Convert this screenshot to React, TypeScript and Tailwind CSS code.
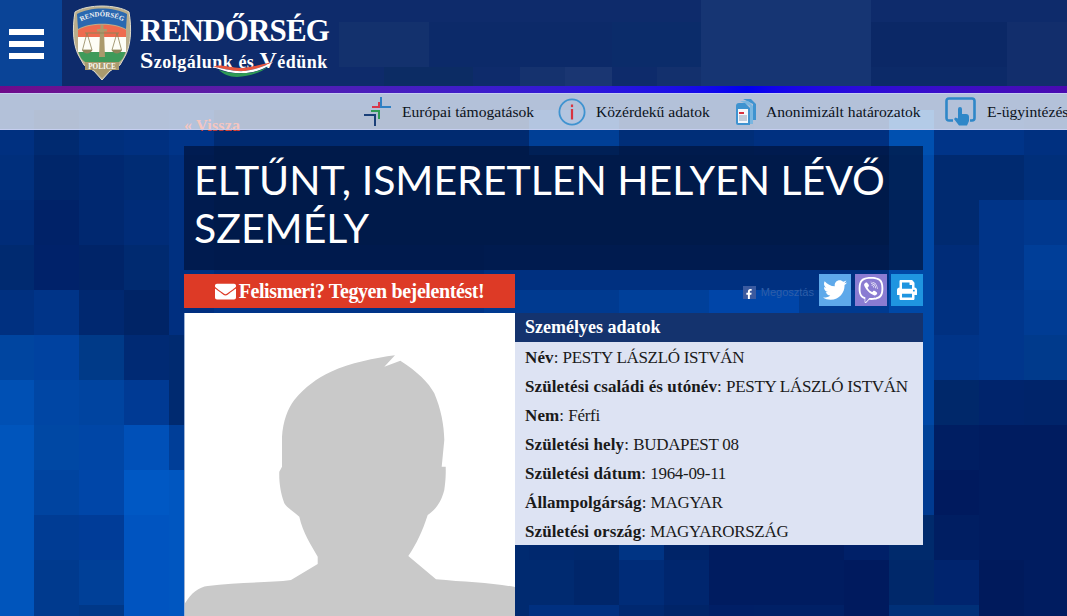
import { FaEnvelope, FaFacebookF, FaPrint, FaTwitter, FaViber } from 'react-icons/fa';

const serif = "font-['Liberation_Serif',serif]";

// mosaic columns start at x = -11 + 45k, rows at y = 110 + 45r
const a = '#002a70';
const n = '#001c60';
const columns: string[][] = [
  ['#003080', '#002f7c', '#002c78', '#002a70', '#003080', '#0045a0', '#0050b4', '#0055bc', '#0055bc', '#0055bc', '#0055bc', '#0055bc'],
  ['#002a70', '#00266a', '#002268', '#00226a', '#003488', '#0042a0', '#0046a4', '#0048a4', '#0044a0', '#003c94', '#003a8e', '#003a8e'],
  ['#002f7c', '#002870', '#002870', '#002468', '#002870', '#003a88', '#0044a0', '#0046a6', '#0046a8', '#003c98', '#004098', '#003888'],
  ['#003080', '#002c74', '#002c78', '#002a70', '#002466', '#002a74', '#003a94', '#0050b8', '#0058c4', '#0054c0', '#0054c0', '#0054c0'],
  ['#003488', '#003080', '#003080', '#003080', '#002f80', '#002a70', '#002a70', '#003e98', '#0056c0', '#0056c0', '#0056c0', '#0056c0'],
  [a, a, a, '#002a78', '#003488', a, a, a, a, a, a, a],
  [a, a, a, '#002a78', '#003488', a, a, a, a, a, a, a],
  [a, a, a, '#002a78', '#003488', a, a, a, a, a, a, a],
  [a, a, a, '#002a78', '#003488', a, a, a, a, a, a, a],
  [a, a, a, '#002a78', '#003488', a, a, a, a, a, a, a],
  [a, a, a, '#002a78', '#003488', a, a, a, a, a, a, a],
  [a, a, a, '#003080', '#003a90', a, a, a, a, '#002a70', '#002a70', '#002a70'],
  ['#003f96', a, a, '#003080', '#003a90', a, a, a, a, '#00286e', '#002a70', '#003080'],
  ['#003f96', a, a, '#003080', '#003a90', a, a, a, a, '#00286c', '#00266a', '#003080'],
  ['#002e78', a, a, '#003080', '#00409a', a, a, a, a, '#003484', '#002c78', '#002870'],
  ['#002e78', a, a, '#003080', '#00409a', a, a, a, a, '#002468', '#00266e', '#002468'],
  ['#002e78', a, a, '#003080', '#0045a8', a, a, a, a, n, n, '#001f66'],
  ['#003080', a, a, '#003080', '#0045a8', a, a, a, a, n, n, '#002066'],
  ['#003080', a, a, '#003080', '#003a90', a, a, a, a, n, n, '#002066'],
  ['#003080', a, a, '#003080', '#003a90', a, a, a, a, '#002068', '#001a5e', '#001a5e'],
  ['#0050b0', '#004aa8', '#0048a6', '#0048a6', '#0048a6', '#0048a6', '#0048a6', '#004298', '#003a90', '#002a6c', '#00286a', '#003078'],
  ['#003488', '#002a70', '#002a70', '#002c78', '#003080', '#003488', '#00286a', '#001e62', '#001a5e', '#001e62', '#00246e', '#003078'],
  ['#003488', '#002a70', '#003488', '#003488', '#00368c', '#00368c', '#00246c', n, n, n, '#001a5c', '#001a5c'],
  ['#003080', '#002f7a', '#00388e', '#003e98', '#003c94', '#003a8c', '#00246a', n, n, n, n, n],
];

const headerTiles: [number, number, number, number, string][] = [
  [701, 0, 170, 86, '#163573'],
  [339, 22, 90, 45, '#13316d'],
  [429, 22, 183, 45, '#0c2a69'],
  [612, 22, 89, 45, '#0b2c6a'],
  [871, 22, 136, 45, '#0b2866'],
  [1007, 22, 60, 64, '#122e6c'],
  [384, 67, 89, 19, '#0c2c64'],
  [520, 67, 45, 19, '#15326e'],
  [565, 67, 47, 19, '#1a3672'],
  [657, 67, 44, 19, '#13306d'],
  [871, 67, 136, 19, '#0c2a68'],
];

const personalData = [
  ['Név', 'PESTY LÁSZLÓ ISTVÁN'],
  ['Születési családi és utónév', 'PESTY LÁSZLÓ ISTVÁN'],
  ['Nem', 'Férfi'],
  ['Születési hely', 'BUDAPEST 08'],
  ['Születési dátum', '1964-09-11'],
  ['Állampolgárság', 'MAGYAR'],
  ['Születési ország', 'MAGYARORSZÁG'],
];

const Mosaic = () => (
  <svg className="absolute inset-0" width={1067} height={616} aria-hidden="true">
    {columns.map((col, k) =>
      col.map((fill, r) => (
        <rect key={`${k}-${r}`} x={-11 + 45 * k} y={110 + 45 * r} width={45.5} height={45.5} fill={fill} />
      ))
    )}
    <rect x={0} y={0} width={1067} height={110} fill="#003080" />
  </svg>
);

const Shield = () => (
  <svg width={60} height={76} viewBox="0 0 60 76" className="shrink-0" aria-hidden="true">
    <path d="M30 1 C20 1 9 3 3 7 C0 24 1 42 8 53 L12 60 L22 66 L30 75 L38 66 L48 60 L52 53 C59 42 60 24 57 7 C51 3 40 1 30 1 Z" fill="#b9ad8c" stroke="#e0dccb" strokeWidth="1" />
    <path d="M30 3.5 C21 3.5 11 5.5 5 9 L6 24 C18 17 42 17 54 24 L55 9 C49 5.5 39 3.5 30 3.5 Z" fill="#2a68b0" />
    <path id="shieldArc" d="M8 17 C20 9.5 40 9.5 52 17" fill="none" />
    <text fontFamily="'Liberation Serif',serif" fontSize="6.8" fontWeight="700" fill="#f2f2f2">
      <textPath href="#shieldArc" startOffset="50%" textAnchor="middle">RENDŐRSÉG</textPath>
    </text>
    <path d="M6 25 C18 18 42 18 54 25 L54 32 L6 32 Z" fill="#ee6b4f" />
    <rect x="6" y="32" width="48" height="15" fill="#fdfdf6" />
    <path d="M6.5 47 L53.5 47 C52 52 50 55 47 57 L13 57 C10 55 8 52 6.5 47 Z" fill="#3f9a5a" />
    <path d="M28.5 20 L31.5 20 L31.5 24 L35 24 L35 26.5 L32 26.5 L33 52 L27 52 L28 26.5 L25 26.5 L25 24 L28.5 24 Z" fill="#ab9a6c" />
    <path d="M13 28 L47 28" stroke="#8f8358" strokeWidth="1.2" />
    <path d="M15 28 L10.5 45 L20 45 Z M45 28 L40 45 L49.5 45 Z" fill="none" stroke="#8f8358" strokeWidth="0.8" />
    <path d="M10 45 C12 49.5 18 49.5 20.5 45 Z M39.5 45 C42 49.5 48 49.5 50 45 Z" fill="#8f8358" />
    <path d="M13 57 L47 57 L47 65 L38 65 L30 73 L22 65 L13 65 Z" fill="#a99a6e" />
    <text x="30" y="64" textAnchor="middle" fontFamily="'Liberation Serif',serif" fontSize="7.2" fontWeight="700" fill="#fbfbf3">POLICE</text>
  </svg>
);

const EuIcon = () => (
  <svg width={29} height={29} viewBox="0 0 29 29" fill="none" className="shrink-0" aria-hidden="true">
    <path d="M18 0 V10 H28" stroke="#2f80c4" strokeWidth="2" />
    <path d="M9 10 H16 V5" stroke="#d9364a" strokeWidth="2" />
    <path d="M8 14 H16 V22" stroke="#2f9a55" strokeWidth="2" />
    <path d="M1 18 H12 V29" stroke="#1a3f78" strokeWidth="2" />
  </svg>
);

const InfoIcon = () => (
  <svg width={28} height={28} viewBox="0 0 28 28" fill="none" className="shrink-0" aria-hidden="true">
    <circle cx="14" cy="14" r="12.6" stroke="#3f93d0" strokeWidth="1.8" />
    <rect x="12.9" y="6.5" width="2.2" height="2.6" fill="#d8323f" />
    <rect x="12.9" y="11" width="2.2" height="10.5" fill="#d8323f" />
  </svg>
);

const DocIcon = () => (
  <svg width={22} height={28} viewBox="0 0 22 28" className="shrink-0" aria-hidden="true">
    <path d="M8 1 H16 L21 6 V22 H18 V6 Z" fill="#3f93d0" />
    <path d="M5 3 H13 L18 8 V26 H15 V8 Z" fill="#7ab6e0" />
    <path d="M1 8 Q1 5 4 5 H10 L15 10 V27 H3 Q1 27 1 25 Z" fill="#3f93d0" />
    <rect x="3" y="11" width="10" height="14" fill="#f4f7fb" />
    <rect x="4" y="14" width="5" height="2" fill="#d8323f" />
    <path d="M4 18 H12 M4 20 H12 M4 22 H12" stroke="#8ca0b8" strokeWidth="1" />
  </svg>
);

const TabletIcon = () => (
  <svg width={31} height={29} viewBox="0 0 31 29" className="shrink-0" aria-hidden="true">
    <path d="M8 23.5 H4 Q1.5 23.5 1.5 21 V4 Q1.5 1.5 4 1.5 H27 Q29.5 1.5 29.5 4 V21 Q29.5 23.5 27 23.5 H25" fill="none" stroke="#2f87c8" strokeWidth="2.6" />
    <path d="M13 12 Q13 10 15 10 Q17 10 17 12 V17 H21 Q24 17 24 20 V24 L22 28.5 H14 L9 22 L10.5 20.5 L13 21.5 Z" fill="#2f87c8" />
  </svg>
);

const Ribbon = () => (
  <svg width={60} height={16} viewBox="0 0 60 16" className="absolute left-[73px] top-[47px]" aria-hidden="true">
    <path d="M0 5 C10 1 18 7 30 6 C40 5 50 2 60 0 C52 4 42 8 32 9 C20 10 10 6 0 5 Z" fill="#e8563f" />
    <path d="M0 5 C10 6 20 10 32 9 C42 8 52 4 60 0 C54 6 42 11 30 11 C18 12 8 8 0 5 Z" fill="#ffffff" />
    <path d="M6 8 C14 10 20 12 30 11 C40 11 50 8 56 4 C48 11 36 14 24 15 C16 15 10 12 6 8 Z" fill="#2f9a55" />
  </svg>
);

const NavItem = ({ icon, label, className }: { icon: React.ReactNode; label: string; className: string }) => (
  <div className={`flex shrink-0 items-center ${className}`}>
    {icon}
    <span className="whitespace-nowrap text-[15.6px] text-[#0b1220]">{label}</span>
  </div>
);

const App = () => {
  return (
    <div className={`relative h-[616px] w-full overflow-hidden ${serif}`}>
      <Mosaic />

      <header className="relative flex h-[86px] bg-[#0e2b6b]">
        <svg className="absolute inset-0" width={1067} height={86} aria-hidden="true">
          {headerTiles.map(([x, y, w, h, fill]) => (
            <rect key={`${x}-${y}`} x={x} y={y} width={w} height={h} fill={fill} />
          ))}
        </svg>
        <div className="relative flex w-[62px] flex-col items-center justify-center gap-[6px] bg-[#0a4497] pr-[9px] pt-[1px]">
          <span className="h-[6px] w-[35px] bg-white" />
          <span className="h-[6px] w-[35px] bg-white" />
          <span className="h-[6px] w-[35px] bg-white" />
        </div>
        <div className="relative ml-[10px] mt-[5px]">
          <Shield />
        </div>
        <div className="relative ml-[8px] mt-[15px] w-[200px] text-white">
          <div className="whitespace-nowrap text-[31px] font-bold leading-[32px] tracking-[-0.8px]">RENDŐRSÉG</div>
          <div className="mt-[2px] whitespace-nowrap text-[18px] font-bold leading-[22px] tracking-[0.5px]">
            <span className="text-[24px]">S</span>zolgálunk és <span className="text-[24px]">V</span>édünk
          </div>
          <Ribbon />
        </div>
      </header>

      <div className="relative h-[7px] bg-linear-to-r from-[#6f0a8a] via-[#0000f0] via-70% to-[#4a0ab0]" />

      <nav className="relative z-10 flex h-[37px] items-center overflow-hidden border-t border-b border-[#c5cef0] bg-white/70 pl-[363px]">
        <NavItem icon={<EuIcon />} label="Európai támogatások" className="w-[195px] gap-[10px]" />
        <NavItem icon={<InfoIcon />} label="Közérdekű adatok" className="w-[177px] gap-[10px]" />
        <NavItem icon={<DocIcon />} label="Anonimizált határozatok" className="w-[210px] gap-[9px]" />
        <NavItem icon={<TabletIcon />} label="E-ügyintézés" className="w-[140px] gap-[11px]" />
      </nav>

      <main className="relative ml-[184px] w-[739px]">
        <div className="-mt-[13px] h-[29px] text-[16px] font-bold leading-[18px] tracking-[0.2px] text-[#e0402a]">« Vissza</div>

        <div className="h-[124px] bg-[#00123a]/70 px-[10px] pt-[10px]">
          <h1 className="font-['Lato',sans-serif] text-[41px] font-normal leading-[48px] text-white">
            ELTŰNT, ISMERETLEN HELYEN LÉVŐ SZEMÉLY
          </h1>
        </div>

        <div className="mt-[4px] flex justify-between">
          <button type="button" className="flex h-[34px] w-[331px] items-center justify-center gap-[3px] bg-[#dd3a26] text-[20px] font-bold tracking-[-0.4px] text-white">
            <FaEnvelope className="text-[21px]" />
            Felismeri? Tegyen bejelentést!
          </button>
          <div className="flex items-start gap-[4px]">
            <div className="mr-[1px] mt-[12px] flex items-center gap-[5px]">
              <span className="flex h-[13px] w-[13px] items-end justify-center bg-[#3b5a9f]">
                <FaFacebookF className="text-[10px] text-white" />
              </span>
              <span className="font-['Liberation_Sans',sans-serif] text-[11px] leading-[13px] text-[#2e5ea8]">Megosztás</span>
            </div>
            <span className="flex h-[32px] w-[32px] items-center justify-center bg-[#5ea9ea]">
              <FaTwitter className="text-[24px] text-white" />
            </span>
            <span className="flex h-[32px] w-[32px] items-center justify-center bg-[#8a7cd2]">
              <FaViber className="text-[26px] text-white" />
            </span>
            <span className="flex h-[32px] w-[32px] items-center justify-center bg-[#1f95e0]">
              <FaPrint className="text-[20px] text-white" />
            </span>
          </div>
        </div>

        <div className="mt-[5px] flex items-start">
          <div className="h-[303px] w-[331px] shrink-0 overflow-hidden border-l border-[#9db2d4] bg-white">
            <svg width={331} height={303} viewBox="0 0 331 303" aria-hidden="true">
              <path
                d="M210 42.3 L199.3 53.7 L215.3 47.7 C232 58 244 70 249.3 80.3 C256 96 259 112 259.3 127 L256.7 153.7 L260.7 153.7 C261 165 260 172 259.3 177 C256 190 250 197 242.7 202 C238 217 231 232 223.3 243 L251 266.3 C280 269 310 270 331.3 274.3 L331.3 303 L0 303 L0 290.3 C6 280 14 274 22.7 273 C50 269 85 270 106 267 L132.7 251 L132.7 243.7 C126 232 118 220 114.3 203.7 C107 197 102 195 99.3 190.3 C95 178 94 168 94.3 158.7 L97 153.7 L97 123.7 C98 108 103 95 109.3 87 C120 74 132 65 146 58.7 C165 50 190 45 210 42.3 Z"
                fill="#c9c9c9"
              />
            </svg>
          </div>
          <div className="w-[408px]">
            <div className="h-[29px] bg-[#14336e] pl-[10px] text-[18px] font-bold leading-[28px] text-white">Személyes adatok</div>
            <div className="h-[203px] overflow-hidden bg-[#dde3f3] pl-[10px] pt-px text-[17px] leading-[29px] text-[#1a1a1a]">
              {personalData.map(([label, value]) => (
                <div key={label} className="whitespace-nowrap">
                  <strong className="font-bold tracking-[0.1px]">{label}</strong>: <span className="tracking-[-0.3px]">{value}</span>
                </div>
              ))}
            </div>
          </div>
        </div>
      </main>
    </div>
  );
};

export default App;
